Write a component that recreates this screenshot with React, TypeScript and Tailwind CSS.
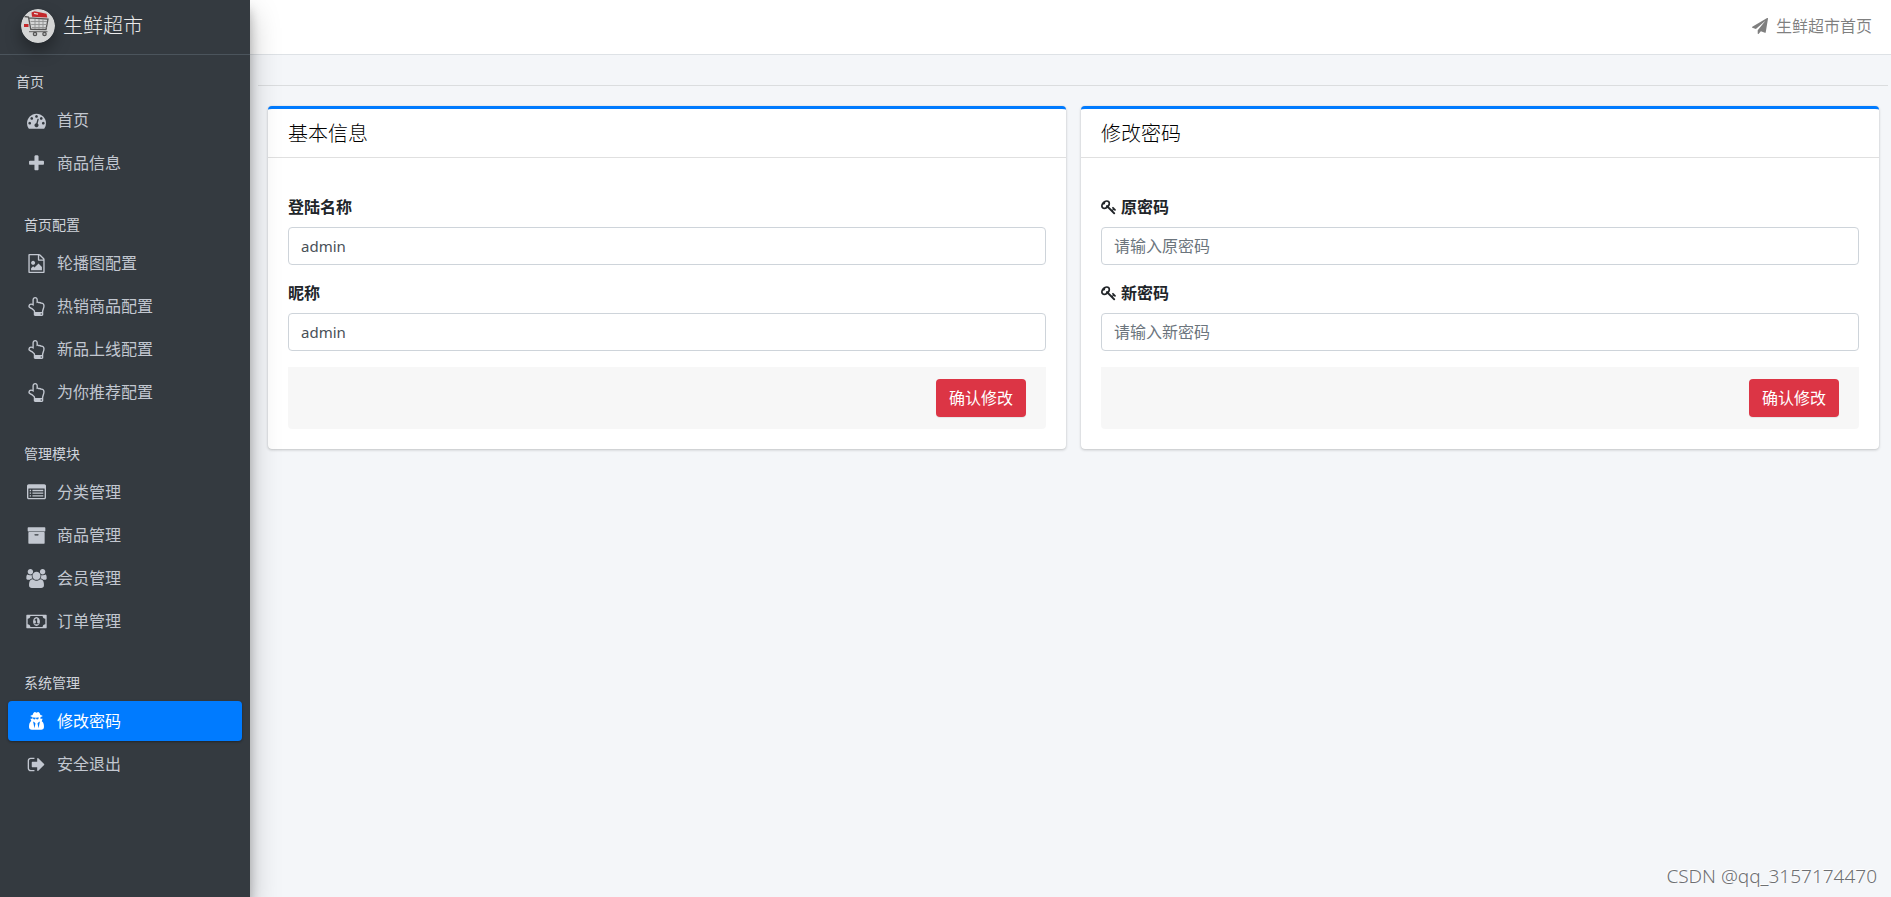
import React from "react";

const ICONS = {
  dashboard:
    "M384 1152q0-53-37.5-90.5t-90.5-37.5-90.5 37.5-37.5 90.5 37.5 90.5 90.5 37.5 90.5-37.5 37.5-90.5zm192-448q0-53-37.5-90.5t-90.5-37.5-90.5 37.5-37.5 90.5 37.5 90.5 90.5 37.5 90.5-37.5 37.5-90.5zm428 481l101-382q6-26-7.5-48.5t-38.5-29.5-48 6.5-30 39.5l-101 382q-60 5-107 43.5t-63 98.5q-20 77 20 146t117 89 146-20 89-117q16-60-6-117t-72-91zm660-33q0-53-37.5-90.5t-90.5-37.5-90.5 37.5-37.5 90.5 37.5 90.5 90.5 37.5 90.5-37.5 37.5-90.5zm-640-640q0-53-37.5-90.5t-90.5-37.5-90.5 37.5-37.5 90.5 37.5 90.5 90.5 37.5 90.5-37.5 37.5-90.5zm448 192q0-53-37.5-90.5t-90.5-37.5-90.5 37.5-37.5 90.5 37.5 90.5 90.5 37.5 90.5-37.5 37.5-90.5zm320 448q0 261-141 483-19 29-54 29h-1402q-35 0-54-29-141-221-141-483 0-182 71-348t191-286 286-191 348-71 348 71 286 191 191 286 71 348z",
  plus: "M1600 736v192q0 40-28 68t-68 28h-416v416q0 40-28 68t-68 28h-192q-40 0-68-28t-28-68v-416h-416q-40 0-68-28t-28-68v-192q0-40 28-68t68-28h416v-416q0-40 28-68t68-28h192q40 0 68 28t28 68v416h416q40 0 68 28t28 68z",
  image:
    "M1596 380q28 28 48 76t20 88v1152q0 40-28 68t-68 28h-1344q-40 0-68-28t-28-68v-1600q0-40 28-68t68-28h896q40 0 88 20t76 48zm-444-244v376h376q-10-29-22-41l-313-313q-12-12-41-22zm384 1528v-1024h-416q-40 0-68-28t-28-68v-416h-768v1536h1280zm-128-448v320h-1024v-192l192-192 128 128 384-384zm-832-192q-80 0-136-56t-56-136 56-136 136-56 136 56 56 136-56 136-136 56z",
  hand: "M1408 1600q0-26-19-45t-45-19-45 19-19 45 19 45 45 19 45-19 19-45zm128-764q0-189-167-189-26 0-56 5-16-30-52.5-47.5t-73.5-17.5-69 18q-50-53-119-53-25 0-55.5 10t-47.5 25v-331q0-52-38-90t-90-38q-51 0-89.5 39t-38.5 89v576q-20 0-48.5-15t-55-33-68-33-84.5-15q-67 0-97.5 44.5t-30.5 115.5q0 24 139 90 44 24 65 37 64 40 145 112 81 71 106 101 57 69 57 140v32h640v-32q0-72 32-167t64-193.5 32-179.5zm128-5q0 133-69 322-59 164-59 223v288q0 53-37.5 90.5t-90.5 37.5h-640q-53 0-90.5-37.5t-37.5-90.5v-288q0-10-4.5-21.5t-14-23.5-18-22.5-22.5-24-21.5-20.5-21.5-19-17-14q-74-65-129-100-21-13-62-33t-72-37-63-40.5-49.5-55-17.5-69.5q0-125 67-206.5t189-81.5q68 0 128 22v-374q0-104 76-180t179-76q105 0 181 75.5t76 180.5v169q62 4 119 37 21-3 43-3 101 0 178 60 139-1 219.5 85t80.5 227z",
  list: "M160 128h1472q66 0 113 47t47 113v1088q0 66-47 113t-113 47h-1472q-66 0-113-47t-47-113v-1088q0-66 47-113t113-47zM128 544v832q0 32 32 32h1472q32 0 32-32v-832q0-32-32-32h-1472q-32 0-32 32zM256 640h128v128h-128zM256 896h128v128h-128zM256 1152h128v128h-128zM512 640h1024v128h-1024zM512 896h1024v128h-1024zM512 1152h1024v128h-1024z",
  archive:
    "M1088 832q0-26-19-45t-45-19h-256q-26 0-45 19t-19 45 19 45 45 19h256q26 0 45-19t19-45zm576-192v960q0 26-19 45t-45 19h-1408q-26 0-45-19t-19-45v-960q0-26 19-45t45-19h1408q26 0 45 19t19 45zm64-448v256q0 26-19 45t-45 19h-1536q-26 0-45-19t-19-45v-256q0-26 19-45t45-19h1536q26 0 45 19t19 45z",
  group:
    "M529 896q-162 5-265 128h-134q-82 0-138-40.5t-56-118.5q0-353 124-353 6 0 43.5 21t97.5 42.5 119 21.5q67 0 133-23-5 37-5 66 0 139 81 256zm1071 637q0 120-73 189.5t-194 69.5h-874q-121 0-194-69.5t-73-189.5q0-53 3.5-103.5t14-109 26.5-108.5 43-97.5 62-81 85.5-53.5 111.5-20q10 0 43 21.5t73 48 107 48 135 21.5 135-21.5 107-48 73-48 43-21.5q61 0 111.5 20t85.5 53.5 62 81 43 97.5 26.5 108.5 14 109 3.5 103.5zm-1024-1277q0 106-75 181t-181 75-181-75-75-181 75-181 181-75 181 75 75 181zm704 384q0 159-112.5 271.5t-271.5 112.5-271.5-112.5-112.5-271.5 112.5-271.5 271.5-112.5 271.5 112.5 112.5 271.5zm576 225q0 78-56 118.5t-138 40.5h-134q-103-123-265-128 81-117 81-256 0-29-5-66 66 23 133 23 59 0 119-21.5t97.5-42.5 43.5-21q124 0 124 353zm-128-609q0 106-75 181t-181 75-181-75-75-181 75-181 181-75 181 75 75 181z",
  money:
    "M704 1152h384v-96h-128v-448h-114l-148 137 77 80q42-37 55-57h2v288h-128v96zm512-256q0 70-21 142t-59.5 134-101.5 101-138 39-138-39-101.5-101-59.5-134-21-142 21-142 59.5-134 101.5-101 138-39 138 39 101.5 101 59.5 134 21 142zm512 256v-512q-106 0-181-75t-75-181h-1152q0 106-75 181t-181 75v512q106 0 181 75t75 181h1152q0-106 75-181t181-75zm128-832v1152q0 26-19 45t-45 19h-1792q-26 0-45-19t-19-45v-1152q0-26 19-45t45-19h1792q26 0 45 19t19 45z",
  secret:
    "M704 1536l96-448-96-128-128-64zM1088 1536l128-640-128 64-96 128zM1120 526q-2-4-4-6-10-8-96-8-70 0-167 19-7 2-21 2t-21-2q-97-19-167-19-86 0-96 8-2 2-4 6 2 18 4 27 2 3 7.5 6.5t7.5 10.5q2 4 7.5 20.5t7 20.5 7.5 17 8.5 17 9 14 12 13.5 14 9.5 17.5 8 20.5 4 24.5 2q36 0 59-12.5t32.5-30 14.5-34.5 11.5-29.5 17.5-12.5h12q11 0 17.5 12.5t11.5 29.5 14.5 34.5 32.5 30 59 12.5q13 0 24.5-2t20.5-4 17.5-8 14-9.5 12-13.5 9-14 8.5-17 7.5-17 7-20.5 7.5-20.5q2-7 7.5-10.5t7.5-6.5q2-9 4-27zM1600 1405q0 121-73 190t-194 69h-874q-121 0-194-69t-73-190q0-61 4.5-118t19-125.5 37.5-123.5 63.5-103.5 93.5-74.5l-90-220h214q-22-64-22-128 0-12 2-32-194-40-194-96 0-57 210-99 17-62 51.5-134t70.5-114q32-37 76-37 30 0 84 31t84 31 84-31 84-31q44 0 76 37 36 42 70.5 114t51.5 134q210 42 210 99 0 56-194 96 7 81-20 160h214l-82 225q63 33 107.5 96.5t65.5 143.5 29 151.5 8 157.5z",
  signOut:
    "M704 1440q0 4 1 20t.5 26.5-3 23.5-10 19.5-20.5 6.5h-320q-119 0-203.5-84.5t-84.5-203.5v-704q0-119 84.5-203.5t203.5-84.5h320q13 0 22.5 9.5t9.5 22.5q0 4 1 20t.5 26.5-3 23.5-10 19.5-20.5 6.5h-320q-66 0-113 47t-47 113v704q0 66 47 113t113 47h312l11.5 1 11.5 3 8 5.5 7 9 2 13.5zm928-544q0 26-19 45l-544 544q-19 19-45 19t-45-19-19-45v-288h-448q-26 0-45-19t-19-45v-384q0-26 19-45t45-19h448v-288q0-26 19-45t45-19 45 19l544 544q19 19 19 45z",
  plane:
    "M1764 11q33 24 27 64l-256 1536q-5 29-32 45-14 8-31 8-11 0-24-5l-453-185-242 295q-18 23-49 23-13 0-22-4-19-7-30.5-23.5t-11.5-36.5v-349l864-1059-1069 925-395-162q-37-14-40-55-2-40 32-59l1664-960q15-9 32-9 20 0 36 11z",
  key: "M832 512q0-80-56-136t-136-56-136 56-56 136q0 42 19 83-41-19-83-19-80 0-136 56t-56 136 56 136 136 56 136-56 56-136q0-42-19-83 41 19 83 19 80 0 136-56t56-136zm851 704q0 17-49 66t-66 49q-9 0-28.5-16t-36.5-33-38.5-40-24.5-26l-96 96 220 220q28 28 28 68 0 42-39 81t-81 39q-40 0-68-28l-671-671q-176 131-365 131-163 0-265.5-102.5t-102.5-265.5q0-160 95-313t248-248 313-95q163 0 265.5 102.5t102.5 265.5q0 189-131 365l355 355 96-96q-3-3-26-24.5t-40-38.5-33-36.5-16-28.5q0-17 49-66t66-49q13 0 23 10 6 6 46 44.5t82 79.5 86.5 86 73 78 28.5 41z",
};

type IconName = keyof typeof ICONS;

function Icon({ name, className }: { name: IconName; className: string }) {
  return (
    <svg
      viewBox="0 0 1792 1792"
      fill="currentColor"
      fillRule={name === "list" ? "evenodd" : "nonzero"}
      aria-hidden="true"
      className={`shrink-0 overflow-visible ${className}`}
    >
      <path d={ICONS[name]} />
    </svg>
  );
}

function CartLogo() {
  return (
    <svg viewBox="0 0 34 34" aria-hidden="true" className="size-[34px] shrink-0 rounded-full shadow-[0_8px_16px_rgba(0,0,0,0.35)]">
      <circle cx="17" cy="17" r="17" fill="#d4d5d5" />
      <path d="M10.500 3.500l3-1.300 12 2.600.8 3.700-15.300-.8z" fill="#c4282b" />
      <path d="M13 4.300l4 .9" stroke="#e8d8d8" strokeWidth="1.200" />
      <path d="M3 15h4.500v3H3z" fill="#c4282b" />
      <path
        d="M3.500 7.500l4 .6 2.300 12.200 15.200.2 2-10.500-19-1.200"
        fill="none"
        stroke="#555"
        strokeWidth="1.300"
      />
      <path d="M8 22.600h18.500" stroke="#777" strokeWidth="1.200" />
      <path d="M9.500 12.500h16.500M10.200 15.500h15.500M11 18.500h14.500M14 10v10M18 10v10M22 10v10" stroke="#8f9090" strokeWidth="0.900" />
      <circle cx="14" cy="25" r="1.700" fill="#bbb" stroke="#555" strokeWidth="1.200" />
      <circle cx="23.500" cy="25" r="1.700" fill="#bbb" stroke="#555" strokeWidth="1.200" />
    </svg>
  );
}

type Item = { icon: IconName; label: string; active?: boolean };

const GROUPS: { title: string; items: Item[] }[] = [
  {
    title: "首页",
    items: [
      { icon: "dashboard", label: "首页" },
      { icon: "plus", label: "商品信息" },
    ],
  },
  {
    title: "首页配置",
    items: [
      { icon: "image", label: "轮播图配置" },
      { icon: "hand", label: "热销商品配置" },
      { icon: "hand", label: "新品上线配置" },
      { icon: "hand", label: "为你推荐配置" },
    ],
  },
  {
    title: "管理模块",
    items: [
      { icon: "list", label: "分类管理" },
      { icon: "archive", label: "商品管理" },
      { icon: "group", label: "会员管理" },
      { icon: "money", label: "订单管理" },
    ],
  },
  {
    title: "系统管理",
    items: [
      { icon: "secret", label: "修改密码", active: true },
      { icon: "signOut", label: "安全退出" },
    ],
  },
];

function Sidebar() {
  return (
    <aside className="z-10 w-[250px] shrink-0 bg-[#343a40] text-[#c2c7d0] shadow-[0_14px_28px_rgba(0,0,0,0.25),0_10px_10px_rgba(0,0,0,0.22)]">
      <a href="#" className="flex h-[55px] items-center gap-2 border-b border-[#4b545c] pr-4 pb-[2px] pl-[21px] text-xl font-light text-white/90">
        <CartLogo />
        <span>生鲜超市</span>
      </a>
      <nav className="px-2">
        {GROUPS.map((group, i) => (
          <section key={group.title}>
            <h2
              className={
                i === 0
                  ? "px-2 pt-4 pb-2 text-sm leading-[21px] text-[#d0d4db]"
                  : "px-4 pt-7 pb-[7px] text-sm leading-[22px] text-[#d0d4db]"
              }
            >
              {group.title}
            </h2>
            <ul>
              {group.items.map((item) => (
                <li key={item.label} className="mb-[3px]">
                  <a
                    href="#"
                    className={
                      item.active
                        ? "flex h-10 items-center gap-[11px] rounded bg-[#007bff] pl-[19px] text-white shadow-[0_1px_3px_rgba(0,0,0,0.12),0_1px_2px_rgba(0,0,0,0.24)]"
                        : "flex h-10 items-center gap-[11px] rounded pl-[19px]"
                    }
                  >
                    <Icon name={item.icon} className="size-[19px]" />
                    <span>{item.label}</span>
                  </a>
                </li>
              ))}
            </ul>
          </section>
        ))}
      </nav>
    </aside>
  );
}

type FieldProps = { id: string; label: string; icon?: IconName; type?: string; value?: string; placeholder?: string };

function Field({ id, label, icon, type = "text", value, placeholder }: FieldProps) {
  return (
    <div className="mb-4">
      <label htmlFor={id} className="mb-2 flex items-center gap-1 leading-6 font-bold">
        {icon && <Icon name={icon} className="size-4" />}
        {label}
      </label>
      <input
        id={id}
        type={type}
        defaultValue={value}
        placeholder={placeholder}
        className="block h-[38px] w-full rounded border border-[#ced4da] bg-white px-3 text-[15px] leading-6 text-[#495057] placeholder:text-base placeholder:text-[#6c757d]"
      />
    </div>
  );
}

function Card({ title, children }: { title: string; children: React.ReactNode }) {
  return (
    <section className="rounded border-t-3 border-[#007bff] bg-white shadow-[0_0_1px_rgba(0,0,0,0.125),0_1px_3px_rgba(0,0,0,0.2)]">
      <h3 className="border-b border-black/12 px-5 pt-[13px] pb-[11px] text-xl leading-6 font-light text-black">{title}</h3>
      <form className="px-5 pt-[37px] pb-5">
        {children}
        <div className="flex justify-end rounded-b bg-black/3 px-5 py-3">
          <button
            type="button"
            className="h-[38px] rounded bg-[#dc3545] px-[13px] text-white shadow-[0_1px_1px_rgba(0,0,0,0.075)]"
          >
            确认修改
          </button>
        </div>
      </form>
    </section>
  );
}

export default function App() {
  return (
    <div className="flex min-h-screen bg-[#f4f6f9] font-['Noto_Sans','Noto_Sans_CJK_SC',sans-serif] text-base leading-6 text-[#212529]">
      <Sidebar />
      <div className="flex min-w-0 flex-1 flex-col">
        <header className="flex h-[55px] items-center justify-end border-b border-[#dee2e6] bg-white pr-[19px] pb-[2px]">
          <a href="#" className="flex items-center gap-2 text-black/50">
            <Icon name="plane" className="size-4" />
            <span>生鲜超市首页</span>
          </a>
        </header>
        <main className="flex-1 pt-[30px] pr-[3px] pl-2">
          <hr className="border-black/10" />
          <div className="mt-5 grid grid-cols-2 gap-[15px] pr-[9px] pl-[10px]">
            <Card title="基本信息">
              <Field id="login-name" label="登陆名称" value="admin" />
              <Field id="nick-name" label="昵称" value="admin" />
            </Card>
            <Card title="修改密码">
              <Field id="old-password" label="原密码" icon="key" placeholder="请输入原密码" />
              <Field id="new-password" label="新密码" icon="key" placeholder="请输入新密码" />
            </Card>
          </div>
        </main>
        <footer className="flex justify-end pr-[14px] pb-[9px]">
          <span className="text-[19px] leading-6 font-light text-[#6d6f72] [text-shadow:-1px_-1px_0_#fff]">CSDN @qq_3157174470</span>
        </footer>
      </div>
    </div>
  );
}
